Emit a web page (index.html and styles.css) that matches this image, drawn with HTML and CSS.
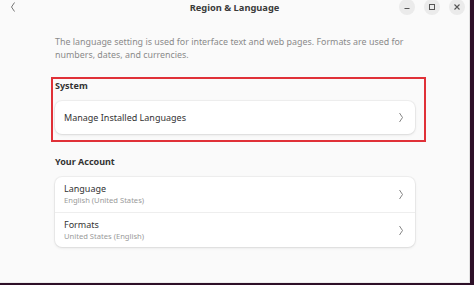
FILE: index.html
```html
<!DOCTYPE html>
<html lang="en">
<head>
    <meta charset="UTF-8">
    <meta name="viewport" content="width=device-width, initial-scale=1.0">
    <title>Region &amp; Language</title>
    <link rel="stylesheet" href="styles.css">
</head>
<body>
    <div class="window">
        <!-- Header bar -->
        <div class="headerbar">
            <span class="back">
                <svg width="8" height="12" viewBox="0 0 8 12"><path d="M5.5 1.5 L2.5 6 L5.5 10.5" fill="none" stroke="#666" stroke-width="0.9"/></svg>
            </span>
            <span class="title">Region &amp; Language</span>
            <div class="controls">
                <span class="ctl">
                    <svg width="8" height="8" viewBox="0 0 8 8"><path d="M1.5 5.5 H6.5" stroke="#555" stroke-width="1"/></svg>
                </span>
                <span class="ctl">
                    <svg width="8" height="8" viewBox="0 0 8 8"><rect x="1.5" y="1.5" width="5" height="5" fill="none" stroke="#555" stroke-width="1"/></svg>
                </span>
                <span class="ctl">
                    <svg width="8" height="8" viewBox="0 0 8 8"><path d="M1.5 1.5 L6.5 6.5 M6.5 1.5 L1.5 6.5" stroke="#555" stroke-width="1.1"/></svg>
                </span>
            </div>
        </div>

        <div class="content">
            <p class="intro">The language setting is used for interface text and web pages. Formats are used for numbers, dates, and currencies.</p>

            <!-- System section -->
            <div class="highlight">
                <h2>System</h2>
                <div class="card">
                    <div class="row single">
                        <span class="label">Manage Installed Languages</span>
                        <svg class="chev" width="6" height="11" viewBox="0 0 6 11"><path d="M1.5 1 L4.5 5.5 L1.5 10" fill="none" stroke="#777" stroke-width="0.9"/></svg>
                    </div>
                </div>
            </div>

            <!-- Account section -->
            <div class="section">
                <h2>Your Account</h2>
                <div class="card">
                    <div class="row">
                        <div>
                            <div class="label">Language</div>
                            <div class="sub">English (United States)</div>
                        </div>
                        <svg class="chev" width="6" height="11" viewBox="0 0 6 11"><path d="M1.5 1 L4.5 5.5 L1.5 10" fill="none" stroke="#777" stroke-width="0.9"/></svg>
                    </div>
                    <div class="row">
                        <div>
                            <div class="label">Formats</div>
                            <div class="sub">United States (English)</div>
                        </div>
                        <svg class="chev" width="6" height="11" viewBox="0 0 6 11"><path d="M1.5 1 L4.5 5.5 L1.5 10" fill="none" stroke="#777" stroke-width="0.9"/></svg>
                    </div>
                </div>
            </div>
        </div>
    </div>
</body>
</html>
```

FILE: styles.css
```css
body {
    margin: 0;
    padding: 0;
    background-color: #2e1028;
    font-family: "Noto Sans", sans-serif;
    color: #333;
}

.window {
    width: 470px;
    height: 283px;
    background: #fafafa;
    border-right: 1px solid #e2e2e2;
    border-bottom: 1px solid #ececec;
    box-sizing: border-box;
}

.headerbar {
    height: 16px;
    display: grid;
    grid-template-columns: 1fr auto 1fr;
    align-items: center;
}

.back {
    margin-left: 9px;
    margin-top: -2px;
    display: flex;
}

.title {
    font-size: 9.3px;
    font-weight: bold;
    color: #3a3a3a;
    margin-top: -2px;
}

.controls {
    display: flex;
    justify-content: flex-end;
    gap: 9px;
    margin-right: 4px;
    margin-top: -2px;
}

.ctl {
    width: 16px;
    height: 16px;
    border-radius: 50%;
    background: #ebebeb;
    display: flex;
    align-items: center;
    justify-content: center;
}

.content {
    padding: 19px 0 0 55px;
    width: 360px;
}

.intro {
    margin: 0;
    font-size: 8.9px;
    line-height: 13px;
    color: #8a8a8a;
    width: 370px;
}

h2 {
    margin: 0;
    font-size: 9px;
    font-weight: bold;
    color: #333;
    line-height: 12px;
}

.highlight {
    margin: 16px 0 0 -4px;
    width: 375px;
    height: 65px;
    box-sizing: border-box;
    border: 2px solid #e03138;
    padding: 1px 0 0 2px;
}

.highlight .card {
    margin-top: 9px;
}

.section {
    margin-top: 14px;
}

.section .card {
    margin-top: 9px;
}

.card {
    width: 360px;
    background: #fff;
    border-radius: 7px;
    box-shadow: 0 0 0 1px rgba(0, 0, 0, 0.04), 0 1px 3px rgba(0, 0, 0, 0.1);
}

.row {
    height: 35px;
    box-sizing: border-box;
    display: flex;
    align-items: center;
    justify-content: space-between;
    padding: 0 11px 0 9px;
    border-top: 1px solid #eeeeee;
}

.row:first-child {
    border-top: none;
}

.row.single {
    height: 33px;
}

.label {
    font-size: 9px;
    color: #333;
    line-height: 12px;
}

.sub {
    font-size: 7.6px;
    color: #9a9a9a;
    line-height: 11px;
}
```
